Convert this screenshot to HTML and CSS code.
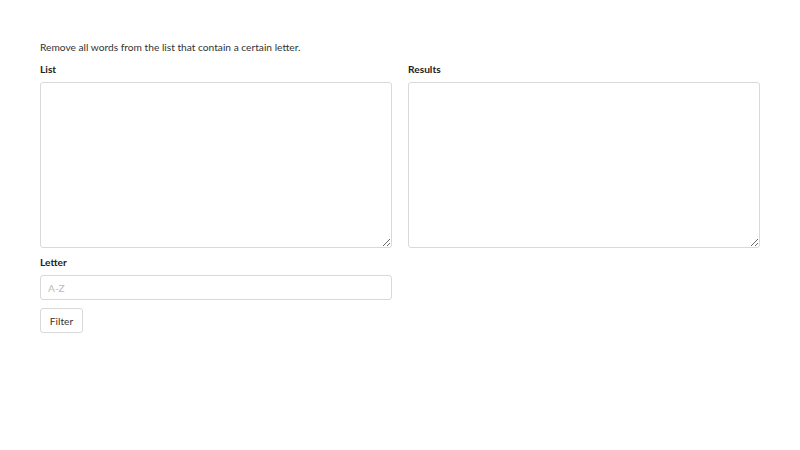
FILE: index.html
```html
<!DOCTYPE html>
<html lang="en">
<head>
  <meta charset="UTF-8" />
  <title>Filter Words</title>
  <link rel="stylesheet" href="styles.css">
</head>
<body>
  <div class="page">
    <p class="intro">Remove all words from the list that contain a certain letter.</p>
    <div class="row">
      <div class="col">
        <label class="lbl" for="list">List</label>
        <textarea id="list" class="box"></textarea>
      </div>
      <div class="col">
        <label class="lbl" for="results">Results</label>
        <textarea id="results" class="box"></textarea>
      </div>
    </div>
    <div class="row">
      <div class="col">
        <label class="lbl" for="letter">Letter</label>
        <input id="letter" class="field" placeholder="A-Z">
        <button class="btn">Filter</button>
      </div>
      <div class="col"></div>
    </div>
  </div>
</body>
</html>
```

FILE: styles.css
```css
body {
  margin: 0;
  font-family: Lato, sans-serif;
  font-size: 10.2px;
  color: #333;
  background: #fff;
}
.page {
  padding: 40px 40px 0;
}
.intro {
  margin: 0 0 7px;
  line-height: 15px;
}
.row {
  display: flex;
  gap: 16px;
}
.col {
  flex: 1;
  display: flex;
  flex-direction: column;
  align-items: flex-start;
}
.lbl {
  font-weight: bold;
  color: #222;
  line-height: 15px;
  margin-bottom: 5px;
}
.box {
  width: 100%;
  height: 166px;
  box-sizing: border-box;
  border: 1px solid #d9d9d9;
  border-radius: 3px;
  margin: 0 0 7px;
  font: inherit;
}
.field {
  width: 100%;
  height: 25px;
  box-sizing: border-box;
  border: 1px solid #d9d9d9;
  border-radius: 3px;
  padding: 0 7px;
  font: inherit;
}
.field::placeholder {
  color: #bbb;
}
.btn {
  margin-top: 8px;
  height: 25px;
  width: 43px;
  padding: 0;
  background: #fff;
  border: 1px solid #d9d9d9;
  border-radius: 3px;
  font: inherit;
  color: #333;
}
```
